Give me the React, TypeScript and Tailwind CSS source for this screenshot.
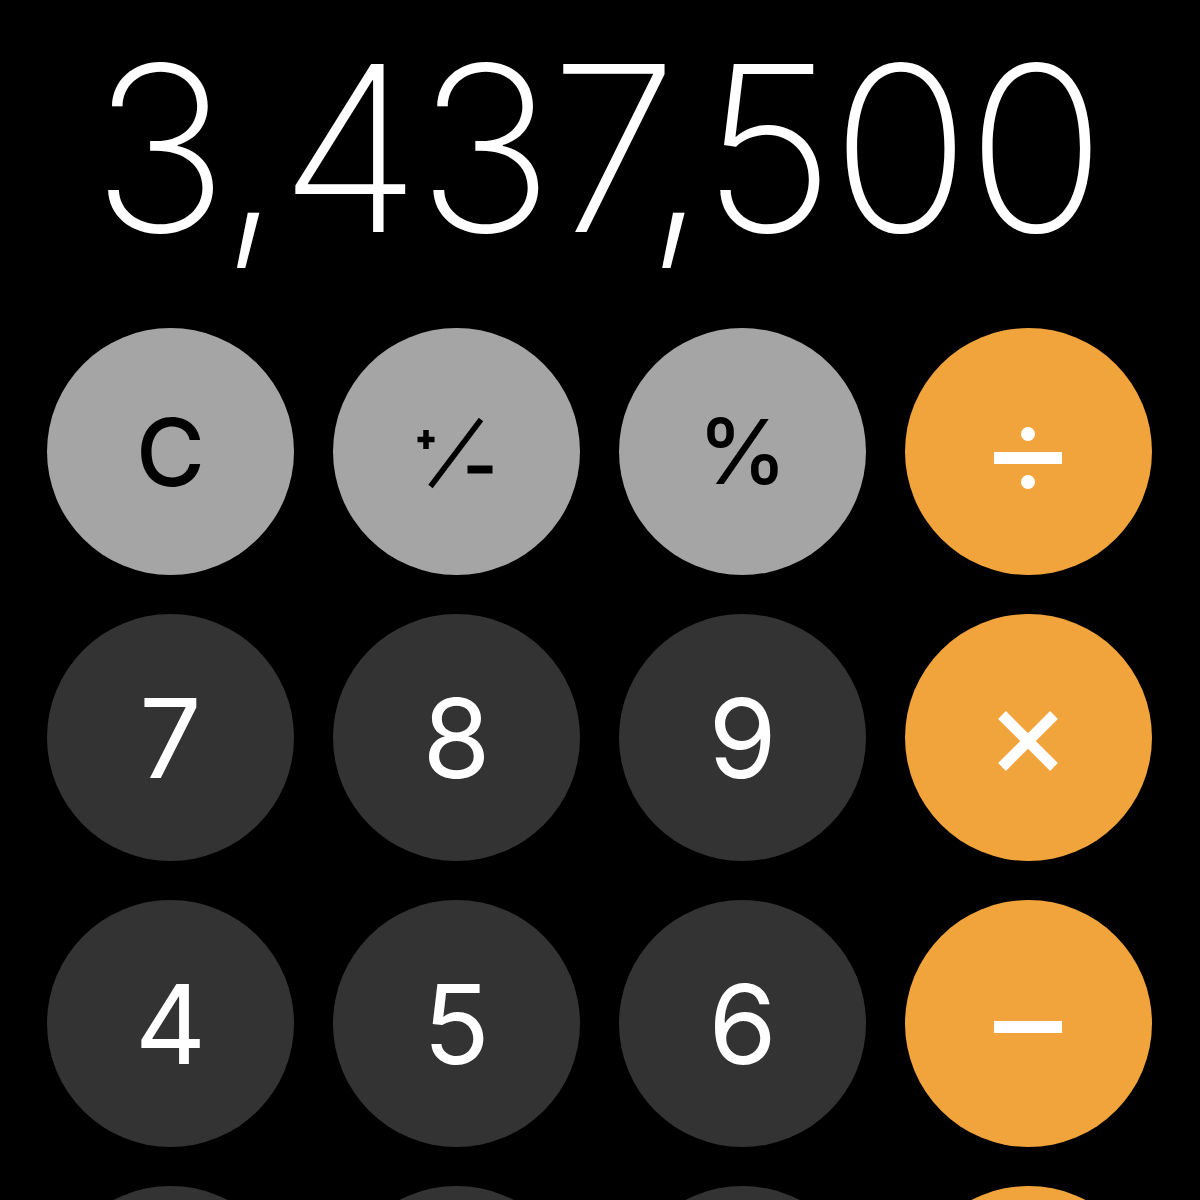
import React from "react";

type Key = { label: React.ReactNode; kind: "fn" | "num" | "op"; name: string };

const fnCls = "bg-[#a5a5a5] text-black";
const numCls = "bg-[#333333] text-white";
const opCls = "bg-[#f1a33c] text-white";

function PlusMinus() {
  return (
    <svg width="80" height="80" viewBox="0 0 80 80" aria-label="+/-">
      <path d="M0.5 27.5h17M9 18v19" stroke="black" strokeWidth="5.5" />
      <path d="M64 7.5L13.5 74.5" stroke="black" strokeWidth="5.5" />
      <path d="M50.5 57.5h25" stroke="black" strokeWidth="8" />
    </svg>
  );
}

function Divide() {
  return (
    <svg width="80" height="80" viewBox="0 0 80 80" aria-label="÷">
      <circle cx="39" cy="22" r="7" fill="white" />
      <rect x="5" y="40" width="68" height="12" fill="white" />
      <circle cx="39" cy="70" r="7" fill="white" />
    </svg>
  );
}

function Times() {
  return (
    <svg width="80" height="80" viewBox="0 0 80 80" aria-label="×">
      <path d="M13 17L65 69M65 17L13 69" stroke="white" strokeWidth="11" />
    </svg>
  );
}

function Minus() {
  return (
    <svg width="80" height="80" viewBox="0 0 80 80" aria-label="−">
      <rect x="5" y="37" width="68" height="12" fill="white" />
    </svg>
  );
}

const keys: Key[] = [
  { name: "C", kind: "fn", label: <span className="text-[94px] font-medium">C</span> },
  { name: "pm", kind: "fn", label: <PlusMinus /> },
  { name: "%", kind: "fn", label: <span className="text-[90px] font-medium">%</span> },
  { name: "div", kind: "op", label: <Divide /> },
  { name: "7", kind: "num", label: "7" },
  { name: "8", kind: "num", label: "8" },
  { name: "9", kind: "num", label: "9" },
  { name: "mul", kind: "op", label: <Times /> },
  { name: "4", kind: "num", label: "4" },
  { name: "5", kind: "num", label: "5" },
  { name: "6", kind: "num", label: "6" },
  { name: "sub", kind: "op", label: <Minus /> },
  { name: "1", kind: "num", label: "1" },
  { name: "2", kind: "num", label: "2" },
  { name: "3", kind: "num", label: "3" },
  { name: "add", kind: "op", label: "+" },
];

export default function App() {
  return (
    <div className="w-[1200px] h-[1200px] overflow-hidden bg-black font-['Inter','Liberation_Sans',sans-serif]">
      <div className="h-[328px] flex items-end justify-end pr-[98px] pb-[64px]">
        <div className="text-white text-[231px] leading-none font-extralight tracking-[-4px]">
          3,437,500
        </div>
      </div>
      <div className="grid grid-cols-[repeat(4,247px)] gap-[39px] pl-[47px]">
        {keys.map((k) => (
          <button
            key={k.name}
            className={
              "w-[247px] h-[247px] rounded-full flex items-center justify-center text-[110px] leading-none " +
              (k.kind === "fn" ? fnCls : k.kind === "op" ? opCls : numCls)
            }
          >
            {k.label}
          </button>
        ))}
      </div>
    </div>
  );
}
